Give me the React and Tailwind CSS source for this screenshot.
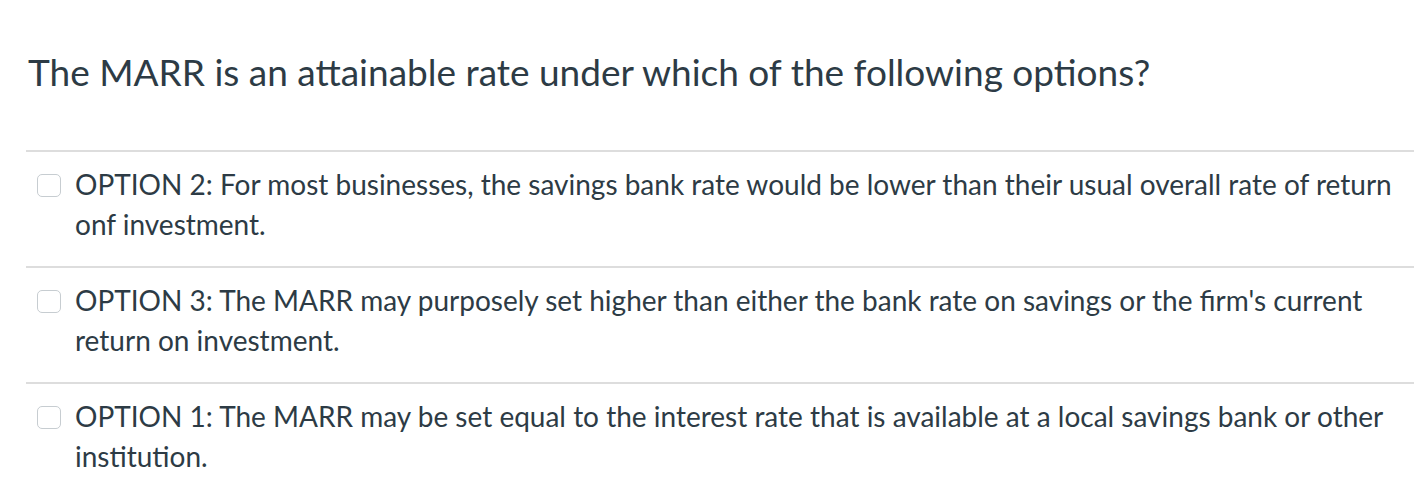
import React from 'react';

const options = [
  'OPTION 2: For most businesses, the savings bank rate would be lower than their usual overall rate of return onf investment.',
  "OPTION 3: The MARR may purposely set higher than either the bank rate on savings or the firm's current return on investment.",
  'OPTION 1: The MARR may be set equal to the interest rate that is available at a local savings bank or other institution.',
];

const App = () => {
  return (
    <div className="w-[1428px] h-[500px] bg-white text-[#2d3b45] font-['Lato',sans-serif] overflow-hidden">
      <h1 className="pl-[28px] pt-[48px] text-[37px] leading-[48px] font-normal">
        The MARR is an attainable rate under which of the following options?
      </h1>

      <div className="mt-[54px] ml-[26px] w-[1388px]">
        {options.map((text) => (
          <div key={text} className="border-t-2 border-[#dddddd] h-[116px] pt-[12px]">
            <label className="flex items-start gap-[14px] pl-[11px]">
              <span className="mt-[10px] shrink-0 w-[24px] h-[23px] rounded-[5px] border border-[#c7cdd1] bg-white" />
              <span className="text-[28px] leading-[40px] pr-[4px]">{text}</span>
            </label>
          </div>
        ))}
      </div>
    </div>
  );
};

export default App;
